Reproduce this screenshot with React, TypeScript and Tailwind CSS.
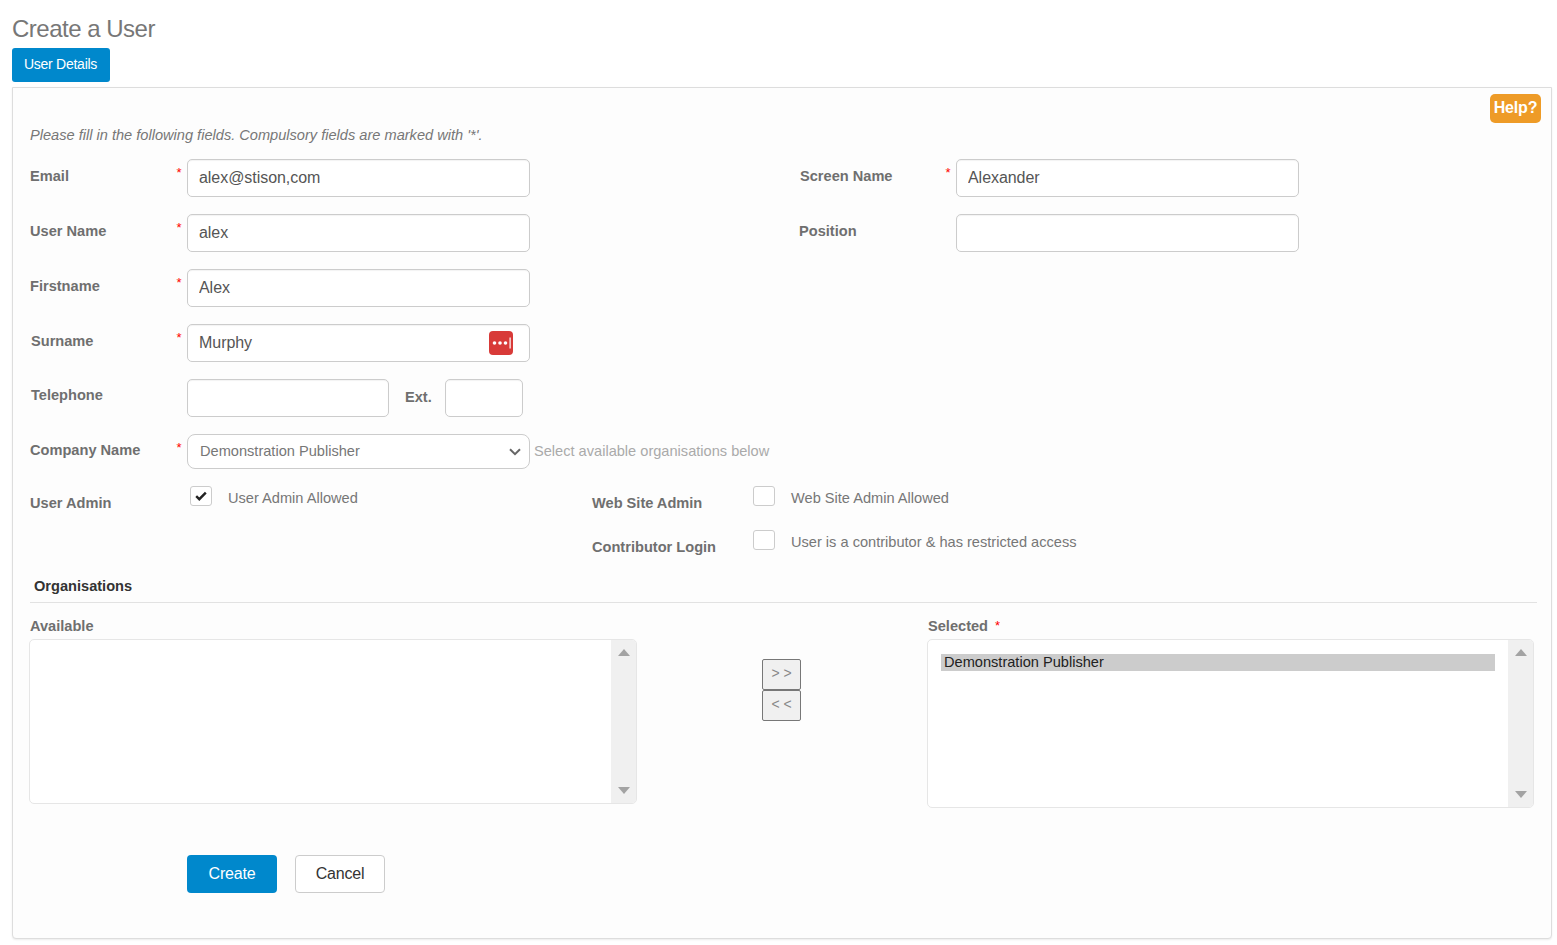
const labelCls = "text-[14.6px] leading-5 font-bold text-[#6f6f6f]";
const inputCls = "h-[38px] rounded-[5px] border border-[#ccc] bg-white px-[11px] text-[16px] tracking-[-0.05px] text-[#555] outline-none shadow-[inset_0_1px_1px_rgba(0,0,0,0.05)]";
const textCls = "ml-[16.5px] mt-[2px] text-[14.6px] leading-5 text-[#777]";

function Star() {
  return <span className="text-[13px] leading-5 text-[#f00]">*</span>;
}

function Field({ label, required, value, labelOffset = "mt-[7px]", children }: { label: string; required?: boolean; value?: string; labelOffset?: string; children?: React.ReactNode }) {
  return (
    <div className="flex h-[38px] mb-[17px]">
      <div className="w-[157px] shrink-0 flex justify-between pr-[5.5px]">
        <span className={labelCls + " " + labelOffset}>{label}</span>
        {required && <span className="mt-px"><Star /></span>}
      </div>
      {children ?? <input className={inputCls + " w-[343px]"} defaultValue={value} readOnly />}
    </div>
  );
}

function Checkbox({ checked }: { checked?: boolean }) {
  return (
    <div className="w-[21.5px] h-[20px] shrink-0 rounded-[3px] border border-[#ccc] bg-white flex items-center justify-center">
      {checked && (
        <svg width="12" height="10" viewBox="0 0 12 10">
          <path d="M1.2 5.2 L4.3 8.2 L10.8 1.6" fill="none" stroke="#222" strokeWidth="2.4" />
        </svg>
      )}
    </div>
  );
}

function ListBox({ height, item }: { height: string; item?: string }) {
  return (
    <div className={"flex rounded-[5px] border border-[#e6e6e6] bg-white overflow-hidden " + height}>
      <div className="flex-1 pl-[13px] pr-[13px] pt-[14px]">
        {item && <div className="h-[17px] bg-[#ccc] pl-[3px] text-[14.6px] leading-[16px] text-[#222]">{item}</div>}
      </div>
      <div className="w-[25px] bg-[#f0f0f0] flex flex-col items-center justify-between pt-[9px] pb-[9px]">
        <svg width="12" height="7" viewBox="0 0 12 7"><path d="M6 0 L12 7 L0 7 Z" fill="#a3a3a3" /></svg>
        <svg width="12" height="7" viewBox="0 0 12 7"><path d="M0 0 L12 0 L6 7 Z" fill="#a3a3a3" /></svg>
      </div>
    </div>
  );
}

export default function App() {
  return (
    <div className="bg-white min-h-[945px] px-[12px] pt-[11px] font-['Liberation_Sans',Arial,sans-serif] text-[#777]">
      <h1 className="text-[24px] leading-[36px] font-normal tracking-[-0.5px] text-[#777] mb-px">Create a User</h1>
      <button className="block h-[34px] w-[98px] rounded-[3px] bg-[#0088cc] pb-[2px] pr-[1px] text-[14px] tracking-[-0.25px] text-white mb-[5px]">User Details</button>

      <div className="relative w-[1540px] rounded-b-[4px] border border-[#ddd] bg-[#fdfdfd] pl-[17px] pr-[14px] pt-[37px] pb-[45px] shadow-[0_1px_2px_rgba(0,0,0,0.08)]">
        <button className="absolute right-[10px] top-[6px] h-[29px] w-[51px] rounded-[5px] bg-[#ee9b27] pb-[2px] text-[16px] font-bold tracking-[-0.2px] text-white">Help?</button>

        <p className="text-[14.6px] leading-5 italic text-[#777] mb-[14px]">Please fill in the following fields. Compulsory fields are marked with '*'.</p>

        <div className="flex">
          <div className="w-[770px] shrink-0">
            <Field label="Email" required value="alex@stison,com" />
            <Field label="User Name" required value="alex" />
            <Field label="Firstname" required value="Alex" />
            <Field label="Surname" required labelOffset="mt-[7px] ml-px">
              <div className="relative w-[343px]">
                <input className={inputCls + " w-full"} defaultValue="Murphy" readOnly />
                <svg className="absolute right-[17px] top-[7px]" width="24" height="24" viewBox="0 0 24 24">
                  <rect width="24" height="24" rx="4" fill="#d83a38" />
                  <circle cx="5.5" cy="12" r="1.8" fill="#fff" />
                  <circle cx="11" cy="12" r="1.8" fill="#fff" />
                  <circle cx="16.5" cy="12" r="1.8" fill="#fff" />
                  <rect x="20.5" y="6.5" width="1.2" height="11" fill="#fff" />
                </svg>
              </div>
            </Field>
            <Field label="Telephone" labelOffset="mt-[6px] ml-px">
              <input className={inputCls + " w-[202px]"} readOnly />
              <span className={labelCls + " ml-[16px] mt-[8px] w-[40px]"}>Ext.</span>
              <input className={inputCls + " w-[78px]"} readOnly />
            </Field>
            <div className="flex h-[35px]">
              <div className="w-[157px] shrink-0 flex justify-between pr-[5.5px]">
                <span className={labelCls + " mt-[6px]"}>Company Name</span>
                <span className="mt-px"><Star /></span>
              </div>
              <div className="relative w-[343px]">
                <select className="h-[35px] w-full appearance-none rounded-[8px] border border-[#ccc] bg-white pl-[12px] text-[14.6px] text-[#777] outline-none">
                  <option>Demonstration Publisher</option>
                </select>
                <svg className="absolute right-[9px] top-[14px]" width="12" height="8" viewBox="0 0 12 8">
                  <path d="M1 1.2 L6 6.2 L11 1.2" fill="none" stroke="#666" strokeWidth="2" />
                </svg>
              </div>
              <span className="ml-[4px] mt-[7px] text-[14.6px] leading-5 text-[#aaa]">Select available organisations below</span>
            </div>
          </div>
          <div className="-ml-px">
            <Field label="Screen Name" required value="Alexander" labelOffset="mt-[7px] ml-px" />
            <Field label="Position" />
          </div>
        </div>

        <div className="flex mt-[17px]">
          <div className="w-[562px] shrink-0 flex">
            <span className={labelCls + " w-[160px] mt-[7px]"}>User Admin</span>
            <Checkbox checked />
            <span className={textCls}>User Admin Allowed</span>
          </div>
          <div>
            <div className="flex h-[44px]">
              <span className={labelCls + " w-[161px] mt-[7px]"}>Web Site Admin</span>
              <Checkbox />
              <span className={textCls}>Web Site Admin Allowed</span>
            </div>
            <div className="flex h-[44px]">
              <span className={labelCls + " w-[161px] mt-[7px]"}>Contributor Login</span>
              <Checkbox />
              <span className={textCls}>User is a contributor &amp; has restricted access</span>
            </div>
          </div>
        </div>

        <div className="mt-[2px] border-b border-[#e2e2e2] pl-[4px] pb-[6px] text-[14.6px] leading-5 font-bold text-[#333]">Organisations</div>

        <div className="flex mt-[13px] -ml-px">
          <div className="w-[608px] shrink-0">
            <div className={labelCls + " ml-px mb-[3px]"}>Available</div>
            <ListBox height="h-[165px]" />
          </div>
          <div className="ml-[125px] w-[39px] shrink-0 pt-[43px]">
            <button className="block h-[31px] w-[39px] rounded-[2px] border border-[#777] bg-[#f0f0f0] pb-[2px] text-[14px] text-[#888]">&gt; &gt;</button>
            <button className="block h-[31px] w-[39px] rounded-[2px] border border-[#777] bg-[#f0f0f0] pb-[2px] text-[14px] text-[#888]">&lt; &lt;</button>
          </div>
          <div className="ml-[126px] w-[607px] shrink-0">
            <div className="ml-px mb-[3px] flex gap-[7px]">
              <span className={labelCls}>Selected</span>
              <Star />
            </div>
            <ListBox height="h-[169px]" item="Demonstration Publisher" />
          </div>
        </div>

        <div className="flex mt-[47px] ml-[157px] gap-[18px]">
          <button className="h-[38px] w-[90px] rounded-[4px] bg-[#0088cc] text-[16px] tracking-[-0.2px] text-white">Create</button>
          <button className="h-[38px] w-[90px] rounded-[4px] border border-[#ccc] bg-white text-[16px] tracking-[-0.2px] text-[#333]">Cancel</button>
        </div>
      </div>
    </div>
  );
}
